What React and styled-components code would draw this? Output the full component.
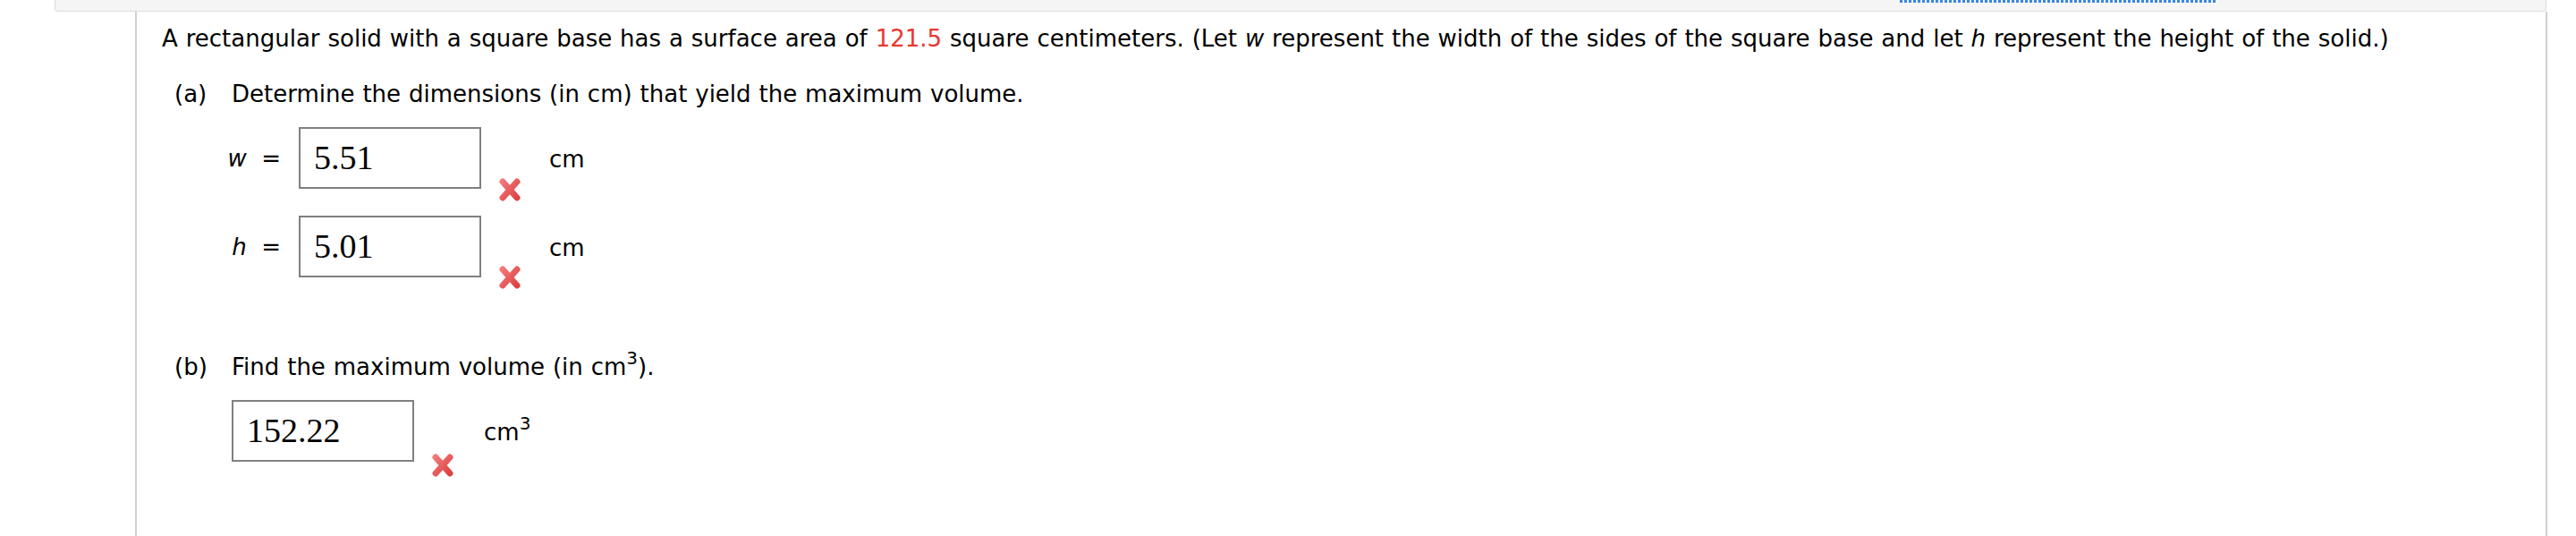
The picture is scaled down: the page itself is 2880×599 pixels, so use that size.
import React from "react";
import styled, { createGlobalStyle } from "styled-components";

const Global = createGlobalStyle`
  html, body { margin: 0; padding: 0; background: #fff; }
  body { font-family: "DejaVu Sans", Verdana, sans-serif; color: #000; }
`;

const Page = styled.div`
  width: 2880px;
  height: 599px;
  overflow: hidden;
  display: flex;
  flex-direction: column;
`;

const TopBar = styled.div`
  margin-left: 61px;
  width: 2786px;
  height: 13px;
  box-sizing: border-box;
  background: #f5f5f5;
  border: 1px solid #dcdcdc;
  border-top: none;
  border-radius: 0 0 4px 4px;
  display: flex;
  align-items: flex-start;
`;

const Progress = styled.div`
  margin-left: auto;
  margin-right: 368px;
  width: 354px;
  height: 3px;
  background: repeating-linear-gradient(
    to right,
    #3a86e2 0 3px,
    transparent 3px 5px
  );
`;

const Panel = styled.div`
  margin-left: 151px;
  width: 2697px;
  flex: 1;
  box-sizing: border-box;
  border-left: 2px solid #d0d0d0;
  border-right: 2px solid #d0d0d0;
  padding: 14px 0 0 28px;
  font-size: 26px;
  line-height: 32px;
  word-spacing: 0.65px;
`;

const Para = styled.div`
  white-space: nowrap;
`;

const Red = styled.span`
  color: #e8382f;
`;

const Var = styled.i`
  font-style: italic;
`;

const Part = styled.div`
  display: flex;
  margin-top: ${(p) => p.$top}px;
  margin-left: 14px;
  white-space: nowrap;
`;

const PartTag = styled.span`
  width: 64px;
  flex: none;
`;

const Sup = styled.sup`
  font-size: 20px;
  line-height: 0;
  vertical-align: baseline;
  position: relative;
  top: -12px;
`;

const Row = styled.div`
  display: flex;
  align-items: flex-start;
  margin-top: ${(p) => p.$top}px;
  margin-left: ${(p) => p.$left}px;
`;

const Label = styled.div`
  width: 119px;
  margin-top: 19px;
  margin-right: 20px;
  text-align: right;
  white-space: pre;
  word-spacing: 0;
`;

const Box = styled.div`
  width: 204px;
  height: 69px;
  box-sizing: border-box;
  border: 2px solid #808080;
  padding-left: 15px;
  font-family: "Liberation Serif", "Times New Roman", serif;
  font-size: 38px;
  line-height: 65px;
  word-spacing: 0;
  background: #fff;
`;

const Mark = styled.svg`
  flex: none;
  width: 26px;
  height: 28px;
  margin-left: ${(p) => p.$left}px;
  margin-top: ${(p) => p.$top}px;
`;

const Unit = styled.div`
  margin-left: ${(p) => p.$left}px;
  margin-top: 20px;
  white-space: nowrap;
`;

function Cross({ left, top }) {
  return (
    <Mark $left={left} $top={top} viewBox="0 0 26 28">
      <defs>
        <linearGradient id="xg" x1="0" y1="0" x2="1" y2="1">
          <stop offset="0" stopColor="#f27777" />
          <stop offset="1" stopColor="#dc4444" />
        </linearGradient>
      </defs>
      <g stroke="url(#xg)" strokeWidth="7" strokeLinecap="round">
        <line x1="5" y1="5" x2="21" y2="23" />
        <line x1="21" y1="5" x2="5" y2="23" />
      </g>
    </Mark>
  );
}

export default function App() {
  return (
    <Page>
      <Global />
      <TopBar>
        <Progress />
      </TopBar>
      <Panel>
        <Para>
          A rectangular solid with a square base has a surface area of{" "}
          <Red>121.5</Red> square centimeters. (Let <Var>w</Var> represent the
          width of the sides of the square base and let <Var>h</Var> represent
          the height of the solid.)
        </Para>

        <Part $top={30}>
          <PartTag>(a)</PartTag>
          <span>Determine the dimensions (in cm) that yield the maximum volume.</span>
        </Part>

        <Row $top={21} $left={14}>
          <Label>
            <Var>w</Var>{"  ="}
          </Label>
          <Box>5.51</Box>
          <Cross left={19} top={56} />
          <Unit $left={31}>cm</Unit>
        </Row>

        <Row $top={15} $left={14}>
          <Label>
            <Var>h</Var>{"  ="}
          </Label>
          <Box>5.01</Box>
          <Cross left={19} top={55} />
          <Unit $left={31}>cm</Unit>
        </Row>

        <Part $top={70}>
          <PartTag>(b)</PartTag>
          <span>
            Find the maximum volume (in cm<Sup>3</Sup>).
          </span>
        </Part>

        <Row $top={21} $left={78}>
          <Box>152.22</Box>
          <Cross left={19} top={59} />
          <Unit $left={33}>
            cm<Sup>3</Sup>
          </Unit>
        </Row>
      </Panel>
    </Page>
  );
}
